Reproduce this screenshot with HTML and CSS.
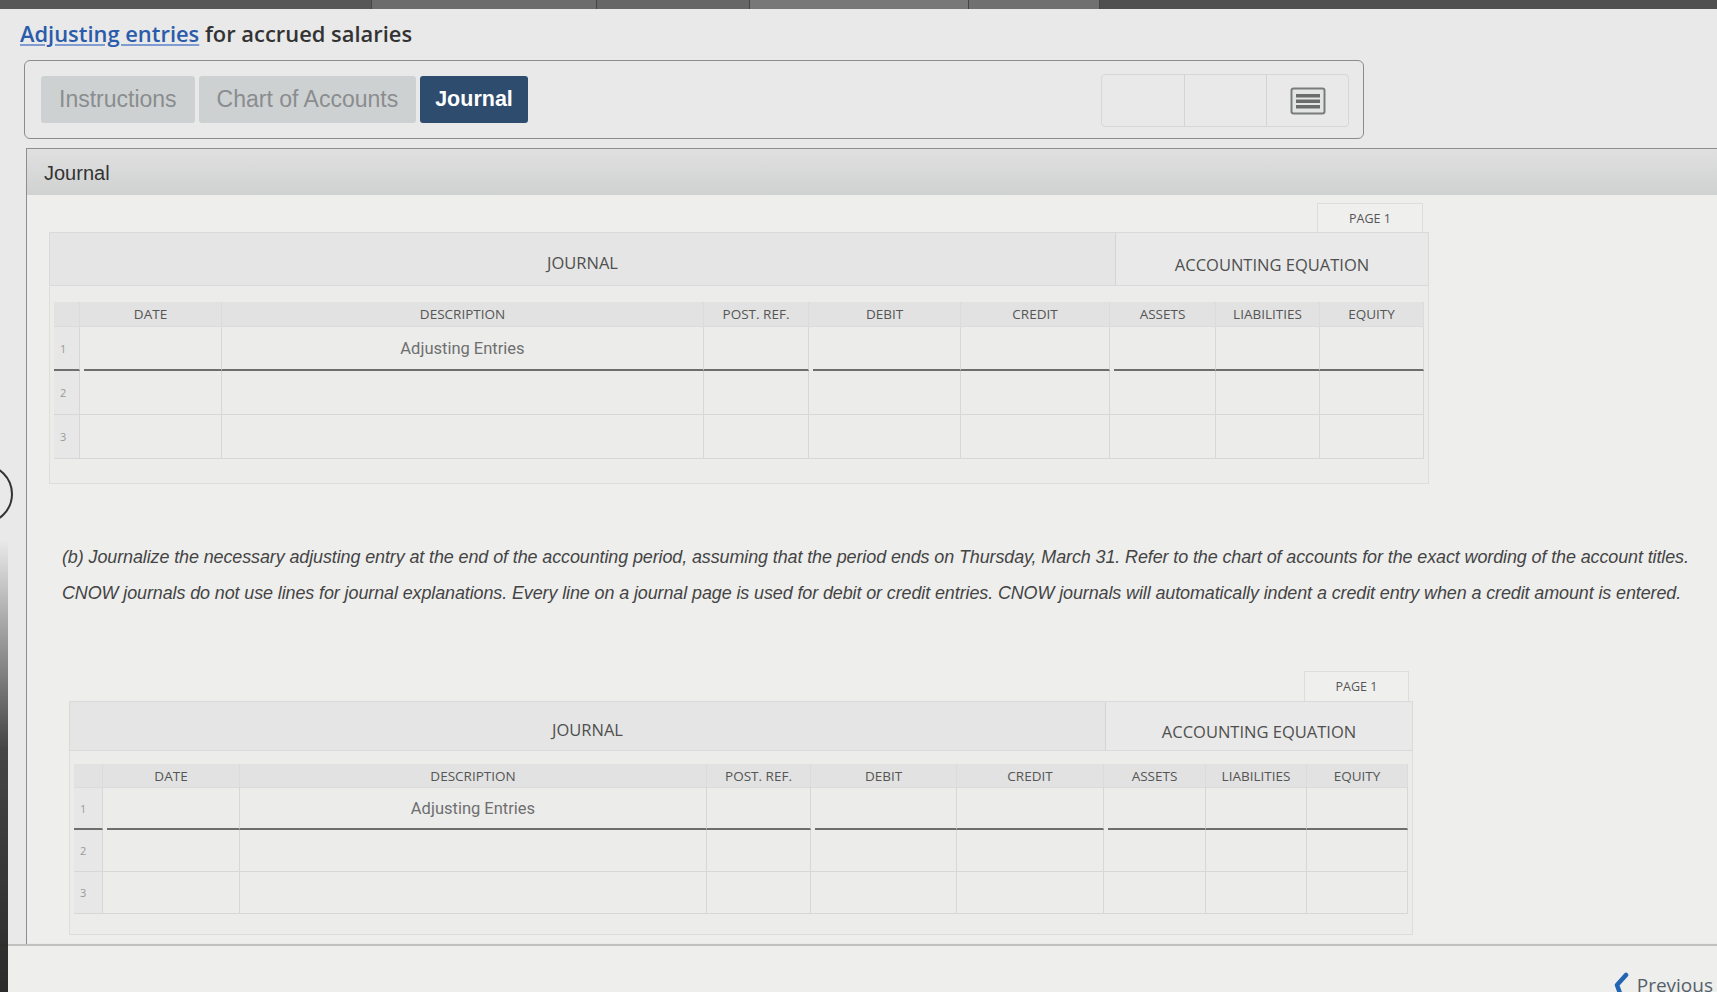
FILE: index.html
```html
<!DOCTYPE html>
<html lang="en">
<head>
    <meta charset="UTF-8">
    <meta name="viewport" content="width=device-width, initial-scale=1.0">
    <title>Adjusting entries for accrued salaries</title>
    <link rel="stylesheet" href="styles.css">
</head>
<body>
    <div class="topbar">
        <span class="seg seg1"></span>
        <span class="seg seg2"></span>
        <span class="seg seg3"></span>
        <span class="seg seg4"></span>
        <span class="seg seg5"></span>
        <span class="seg seg6"></span>
    </div>

    <h1 class="title"><a href="#">Adjusting entries</a> for accrued salaries</h1>

    <div class="tabbox">
        <div class="tabs">
            <button class="tab">Instructions</button>
            <button class="tab">Chart of Accounts</button>
            <button class="tab active">Journal</button>
        </div>
        <div class="tools">
            <span class="tool"></span>
            <span class="tool"></span>
            <span class="tool">
                <svg width="36" height="28" viewBox="0 0 36 28">
                    <rect x="1.5" y="1.5" width="33" height="25" rx="2" fill="#e3e4e4" stroke="#7a7c7c" stroke-width="2"/>
                    <rect x="6" y="7" width="24" height="3.5" fill="#6a6c6c"/>
                    <rect x="6" y="12.5" width="24" height="3.5" fill="#6a6c6c"/>
                    <rect x="6" y="18" width="24" height="3.5" fill="#6a6c6c"/>
                </svg>
            </span>
        </div>
    </div>

    <section class="panel">
        <div class="panel-head">Journal</div>
        <div class="panel-body">

            <div class="jt jt-a">
                <div class="page-row"><div class="page-tab">PAGE 1</div></div>
                <div class="jt-head">
                    <div class="jt-title">JOURNAL</div>
                    <div class="jt-title eq">ACCOUNTING EQUATION</div>
                </div>
                <div class="jt-body">
                    <div class="jt-row cols">
                        <span></span><span>DATE</span><span>DESCRIPTION</span><span>POST. REF.</span>
                        <span>DEBIT</span><span>CREDIT</span><span>ASSETS</span><span>LIABILITIES</span><span>EQUITY</span>
                    </div>
                    <div class="jt-row first">
                        <span class="num">1</span><span class="gs"></span><span class="desc">Adjusting Entries</span><span></span>
                        <span class="gs"></span><span></span><span class="gs"></span><span></span><span></span>
                    </div>
                    <div class="jt-row">
                        <span class="num">2</span><span></span><span></span><span></span>
                        <span></span><span></span><span></span><span></span><span></span>
                    </div>
                    <div class="jt-row">
                        <span class="num">3</span><span></span><span></span><span></span>
                        <span></span><span></span><span></span><span></span><span></span>
                    </div>
                    <div class="jt-foot"></div>
                </div>
            </div>

            <p class="note">(b) Journalize the necessary adjusting entry at the end of the accounting period, assuming that the period ends on Thursday, March 31. Refer to the chart of accounts for the exact wording of the account titles.<br>CNOW journals do not use lines for journal explanations. Every line on a journal page is used for debit or credit entries. CNOW journals will automatically indent a credit entry when a credit amount is entered.</p>

            <div class="jt jt-b">
                <div class="page-row"><div class="page-tab">PAGE 1</div></div>
                <div class="jt-head">
                    <div class="jt-title">JOURNAL</div>
                    <div class="jt-title eq">ACCOUNTING EQUATION</div>
                </div>
                <div class="jt-body">
                    <div class="jt-row cols">
                        <span></span><span>DATE</span><span>DESCRIPTION</span><span>POST. REF.</span>
                        <span>DEBIT</span><span>CREDIT</span><span>ASSETS</span><span>LIABILITIES</span><span>EQUITY</span>
                    </div>
                    <div class="jt-row first">
                        <span class="num">1</span><span class="gs"></span><span class="desc">Adjusting Entries</span><span></span>
                        <span class="gs"></span><span></span><span class="gs"></span><span></span><span></span>
                    </div>
                    <div class="jt-row">
                        <span class="num">2</span><span></span><span></span><span></span>
                        <span></span><span></span><span></span><span></span><span></span>
                    </div>
                    <div class="jt-row">
                        <span class="num">3</span><span></span><span></span><span></span>
                        <span></span><span></span><span></span><span></span><span></span>
                    </div>
                    <div class="jt-foot"></div>
                </div>
            </div>

        </div>
    </section>

    <footer class="bottom">
        <a href="#" class="prev">
            <svg width="20" height="26" viewBox="0 0 20 26">
                <path d="M15 3 L6 13 L10 24" fill="none" stroke="#2266b3" stroke-width="4.5" stroke-linecap="round" stroke-linejoin="round"/>
            </svg>
            Previous
        </a>
    </footer>

    <span class="side-toggle"></span>
    <span class="edge"></span>
</body>
</html>
```

FILE: styles.css
```css
*{
    box-sizing: border-box;
}
html, body{
    overflow: hidden;
}
body{
    margin: 0;
    position: relative;
    background-color: #e8e9e8;
    font-family: "Liberation Sans", Arial, sans-serif;
    color: #333;
}

/* strip of window tabs along the top */
.topbar{
    display: flex;
    height: 9px;
}
.seg{
    height: 100%;
    border-right: 1px solid #444;
}
.seg1{ width: 372px; background-color: #575757; }
.seg2{ width: 225px; background-color: #6c6c6c; }
.seg3{ width: 153px; background-color: #666; }
.seg4{ width: 219px; background-color: #787878; }
.seg5{ width: 131px; background-color: #707070; }
.seg6{ flex: 1; background-color: #4f4f4f; border: none; }

.title{
    margin: 0;
    padding: 11px 0 0 20px;
    font: 600 21.9px/28px "Open Sans", sans-serif;
    color: #333;
}
.title a{
    color: #2a5cab;
    text-decoration: underline;
    text-decoration-color: #7f9bd0;
}

/* tab strip */
.tabbox{
    margin: 12px 0 0 24px;
    width: 1340px;
    height: 79px;
    border: 1.5px solid #8b8d8c;
    border-radius: 6px;
    padding: 0 14px 0 16px;
    display: flex;
    align-items: center;
    justify-content: space-between;
}
.tabs{
    display: flex;
    gap: 4px;
}
.tab{
    height: 47px;
    padding: 0 18px;
    border: none;
    border-radius: 3px;
    background-color: #ced1d2;
    color: #8a8d8f;
    font: 23px "Liberation Sans", Arial, sans-serif;
}
.tab.active{
    padding: 0 15px;
    background-color: #2e4c6e;
    color: #fff;
    font-size: 21.5px;
    font-weight: bold;
}
.tools{
    display: flex;
    height: 53px;
    border: 1px solid #d6d8d8;
    border-radius: 4px;
    margin-top: 2px;
}
.tool{
    width: 82px;
    border-left: 1px solid #d3d5d5;
    display: flex;
    align-items: center;
    justify-content: center;
}
.tool:first-child{
    border-left: none;
}

/* journal panel */
.panel{
    margin: 9px 0 0 26px;
    height: 796px;
    border-top: 1.5px solid #8d8f8e;
    border-left: 1.5px solid #8d8f8e;
}
.panel-head{
    height: 46px;
    line-height: 48px;
    padding-left: 17px;
    font-size: 20px;
    color: #333;
    background: linear-gradient(#dfe0df, #d0d2d1);
}
.panel-body{
    height: 748px;
    padding: 8px 0 0 22px;
    background-color: #eeeeed;
}

/* journal table */
.jt{
    font-family: "Open Sans", sans-serif;
    color: #555;
}
.jt-a{
    width: 1380px;
    --cols: 26px 142px 482px 105px 152px 149px 106px 104px 104px;
    --head: 1065px 1fr;
    --head-h: 54px;
    --gap: 16px;
    --col-h: 25px;
    --row-h: 44px;
    --foot-h: 24px;
    --tab-h: 29px;
    --tab-w: 106px;
    --tab-r: 6px;
}
.jt-b{
    width: 1344px;
    margin-left: 20px;
    --cols: 29px 137px 467px 104px 146px 147px 102px 101px 101px;
    --head: 1035px 1fr;
    --head-h: 50px;
    --gap: 13px;
    --col-h: 24px;
    --row-h: 42px;
    --foot-h: 20px;
    --tab-h: 30px;
    --tab-w: 105px;
    --tab-r: 4px;
}
.page-row{
    display: flex;
    justify-content: flex-end;
    padding-right: var(--tab-r);
}
.page-tab{
    width: var(--tab-w);
    height: var(--tab-h);
    display: flex;
    align-items: center;
    justify-content: center;
    font-size: 12.5px;
    color: #555;
    background-color: #efefee;
    border: 1px solid #dcdddc;
    border-bottom: none;
}
.jt-head{
    display: grid;
    grid-template-columns: var(--head);
    height: var(--head-h);
    background-color: #e4e5e4;
    border: 1px solid #d9dad9;
}
.jt-title{
    display: flex;
    align-items: center;
    justify-content: center;
    font-size: 16.5px;
    color: #4f4f4f;
    padding-top: 6px;
}
.jt-title.eq{
    border-left: 1px solid #d3d4d3;
    background-color: #e8e9e8;
    padding-top: 10px;
}
.jt-body{
    padding: var(--gap) 6px 0 4px;
    background-color: #ececeb;
    border: 1px solid #dcdddc;
    border-top: none;
}
.jt-row{
    display: grid;
    grid-template-columns: var(--cols);
    height: var(--row-h);
}
.jt-row > span{
    display: flex;
    align-items: center;
    justify-content: center;
    border-right: 1px solid #d6d7d6;
    border-bottom: 1px solid #d6d7d6;
}
.jt-row.cols{
    height: var(--col-h);
    font-size: 13.5px;
    color: #555;
}
.jt-row.cols > span{
    background-color: #e1e2e1;
    border-color: #dadbda;
}
.jt-row.first > span{
    border-bottom: 2px solid #6d6e6d;
}
.jt-row.first > .gs{
    margin-left: 4px;
}
.jt-row > .num{
    justify-content: flex-start;
    padding-left: 6px;
    font-size: 11px;
    color: #9a9a9a;
    background-color: #e6e7e6;
}
.jt-row > .desc{
    font-family: Roboto, sans-serif;
    font-size: 16.5px;
    color: #6f6f6f;
}
.jt-foot{
    height: var(--foot-h);
}

.note{
    margin: 55px 0 0 13px;
    font-size: 17.95px;
    font-style: italic;
    line-height: 36px;
    letter-spacing: -0.1px;
    color: #444;
    white-space: nowrap;
}
.jt-b{
    margin-top: 60px;
}

/* bottom navigation */
.bottom{
    height: 60px;
    border-top: 2px solid #bfc0bf;
    background-color: #eeeeed;
    display: flex;
    justify-content: flex-end;
    padding-top: 26px;
}
.prev{
    display: flex;
    align-items: flex-start;
    gap: 6px;
    color: #55606a;
    font-family: "Open Sans", sans-serif;
    font-size: 19px;
    text-decoration: none;
    margin-right: 4px;
}

/* round toggle peeking in from the left edge */
.side-toggle{
    position: absolute;
    left: -47px;
    top: 464px;
    width: 60px;
    height: 60px;
    border: 2px solid #333;
    border-radius: 50%;
}

/* dark screen edge along the lower left */
.edge{
    position: absolute;
    left: 0;
    top: 540px;
    bottom: 0;
    width: 8px;
    background: linear-gradient(rgba(40, 40, 40, 0), rgba(40, 40, 40, 0.85) 45%, #2a2a2a);
}
```
